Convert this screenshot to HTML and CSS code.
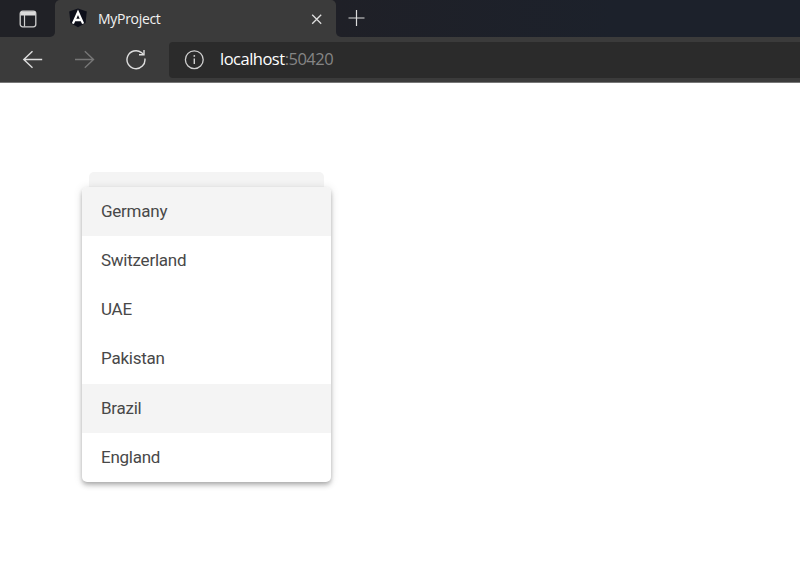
FILE: index.html
```html
<!DOCTYPE html>
<html lang="en">
<head>
    <meta charset="UTF-8">
    <meta name="viewport" content="width=device-width, initial-scale=1.0">
    <title>MyProject</title>
    <link rel="stylesheet" href="styles.css">
</head>
<body>
    <div class="tab-bar">
        <div class="tab-actions">
            <svg width="18" height="18" viewBox="0 0 18 18">
                <rect x="1.2" y="1.2" width="15.6" height="15.6" rx="2.5" fill="none" stroke="#d0d0d0" stroke-width="1.3"/>
                <path d="M1.5 5.5V3.5a2 2 0 0 1 2-2h11a2 2 0 0 1 2 2v2z" fill="#dcdcdc"/>
                <path d="M5.5 5v11.500" stroke="#d0d0d0" stroke-width="1.2"/>
            </svg>
        </div>
        <div class="tab">
            <svg class="favicon" width="18" height="20" viewBox="0 0 18 20">
                <path d="M9 .5L17.800 3.500 16.500 15 9 19.200 1.500 15 .2 3.500z" fill="#0d0f1a"/>
                <path d="M3.900 15.600L9 4.200l5.100 11.400M6 12h6" fill="none" stroke="#fff" stroke-width="2.300"/>
            </svg>
            <span class="tab-title">MyProject</span>
            <svg class="close" width="12" height="12" viewBox="0 0 12 12">
                <path d="M1.2 1.7l9 9M10.2 1.7l-9 9" stroke="#dedede" stroke-width="1.3"/>
            </svg>
        </div>
        <div class="tab-space">
            <svg width="18" height="18" viewBox="0 0 18 18">
                <path d="M8.500 1v16M.5 9h16" stroke="#dcdcdc" stroke-width="1.2"/>
            </svg>
        </div>
    </div>

    <div class="toolbar">
        <svg class="nav-icon" width="22" height="22" viewBox="0 0 22 22">
            <path d="M20.2 10.500H1.800M10.500 2.300L1.800 10.500l8.700 8.200" fill="none" stroke="#dedede" stroke-width="1.4"/>
        </svg>
        <svg class="nav-icon" width="22" height="22" viewBox="0 0 22 22">
            <path d="M1 10.500H19.500M10.800 2.300L19.500 10.500l-8.700 8.200" fill="none" stroke="#777" stroke-width="1.4"/>
        </svg>
        <svg class="nav-icon reload" width="22" height="22" viewBox="0 0 22 22">
            <path d="M18.900 9.500A9 9 0 1 1 15.500 3.600L17.500 5.500" fill="none" stroke="#dedede" stroke-width="1.4"/>
            <path d="M18 1v4.700h-5" fill="none" stroke="#dedede" stroke-width="1.4"/>
        </svg>
        <div class="address">
            <svg width="20" height="20" viewBox="0 0 20 20">
                <circle cx="10.300" cy="9.700" r="8.900" fill="none" stroke="#d0d0d0" stroke-width="1.300"/>
                <path d="M10.300 8.500v5.500" stroke="#d0d0d0" stroke-width="1.400"/>
                <circle cx="10.300" cy="5.900" r=".9" fill="#d0d0d0"/>
            </svg>
            <span class="url">localhost<span class="port">:50420</span></span>
        </div>
    </div>

    <main class="page">
        <div class="select-field">
            <ul class="options">
                <li class="active">Germany</li>
                <li>Switzerland</li>
                <li>UAE</li>
                <li>Pakistan</li>
                <li class="active">Brazil</li>
                <li>England</li>
            </ul>
        </div>
    </main>
</body>
</html>
```

FILE: styles.css
```css
* {
    box-sizing: border-box;
}
body {
    margin: 0;
    height: 580px;
    overflow: hidden;
    background: #fff;
    font-family: Roboto, sans-serif;
}
svg {
    display: block;
    flex: none;
}
.tab-bar {
    display: flex;
    height: 37px;
    background: #3b3b3b;
}
.tab-actions {
    width: 55px;
    padding: 10px 0 0 19px;
    background: #202126;
    border-bottom-right-radius: 5px;
}
/* dark corners behind the rounded top of the tab */
.tab {
    display: flex;
    align-items: center;
    width: 281px;
    padding: 0 13px 0 14px;
    background: #3b3b3b;
    border-radius: 5px 5px 0 0;
    box-shadow: 0 -5px 0 #1f2026;
}
.favicon {
    margin: -1px 11px 0 0;
}
.tab-title {
    flex: 1;
    color: #f2f2f2;
    font-family: "Open Sans", sans-serif;
    font-size: 14px;
    letter-spacing: -0.3px;
}
.tab-space {
    flex: 1;
    padding: 9px 0 0 12px;
    background: linear-gradient(to right, #1f2027, #1c212b 60%);
    border-bottom-left-radius: 5px;
}
.toolbar {
    display: flex;
    align-items: center;
    height: 46px;
    background: #3b3b3b;
    border-bottom: 1px solid #777;
    padding-left: 22px;
}
.nav-icon {
    margin-right: 30px;
}
.reload {
    margin-right: 21px;
}
.address {
    display: flex;
    align-items: center;
    flex: 1;
    height: 36px;
    padding-left: 15px;
    background: #2b2b2b;
    border-radius: 4px 0 0 4px;
}
.url {
    margin: -2px 0 0 16px;
    color: #fff;
    font-family: "Open Sans", sans-serif;
    font-size: 16.5px;
    letter-spacing: -0.5px;
}
.port {
    color: #858585;
}
.page {
    padding: 89px 0 0 89px;
}
.select-field {
    position: relative;
    width: 235px;
    height: 60px;
    background: #f4f4f4;
    border-radius: 5px 5px 0 0;
}
.options {
    position: absolute;
    top: 15px;
    left: -7px;
    width: 249px;
    margin: 0;
    padding: 0;
    overflow: hidden;
    list-style: none;
    background: #fff;
    border-radius: 5px;
    box-shadow: 0 2px 4px -1px rgba(0, 0, 0, 0.2), 0 4px 5px rgba(0, 0, 0, 0.14), 0 1px 10px rgba(0, 0, 0, 0.12);
}
.options li {
    height: 49.17px;
    padding-left: 19px;
    color: #484848;
    font-size: 17px;
    line-height: 49px;
    letter-spacing: -0.25px;
}
.options .active {
    background: #f4f4f4;
}
```
